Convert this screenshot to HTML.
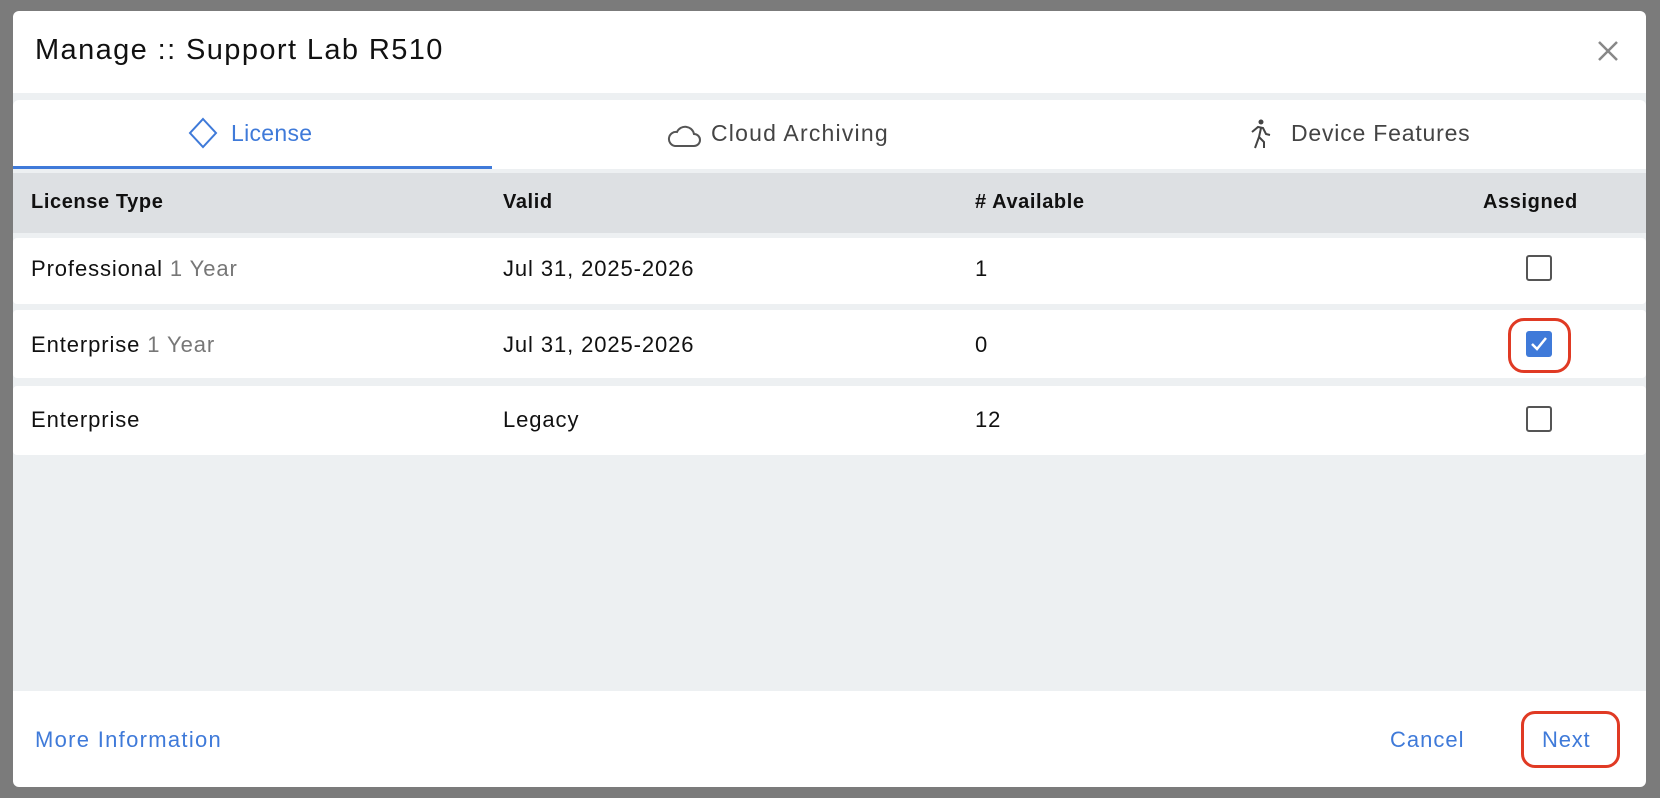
<!DOCTYPE html>
<html><head><meta charset="utf-8"><style>
*{box-sizing:border-box;margin:0;padding:0}
body{width:1660px;height:798px;background:#7b7b7b;font-family:"Liberation Sans",sans-serif;position:relative;overflow:hidden;color:#111}
.dlg{position:absolute;left:13px;top:11px;width:1633px;height:776px;background:#fff;border-radius:6px;overflow:hidden}
.t{position:absolute;white-space:nowrap}
.body{position:absolute;left:0;top:82px;width:1633px;height:598px;background:#edf0f2}
.tabs{position:absolute;left:0;top:89px;width:1633px;height:69px;background:#fff;border-radius:6px 6px 0 0}
.ul{position:absolute;left:0;top:155px;width:479px;height:3px;background:#3f7ad9}
.th{position:absolute;left:0;top:162px;width:1633px;height:60px;background:#dde0e3}
.row{position:absolute;left:0;width:1633px;background:#fff;border-radius:4px}
.cb{position:absolute;width:26px;height:26px;border:2.5px solid #555;border-radius:3px;left:1513px}
.blue{color:#3f7ad9}
.d{font-size:22px;letter-spacing:0.9px}
.h{font-size:20px;font-weight:bold;letter-spacing:0.6px}
</style></head><body>
<div class="dlg">
<div class="t" style="left:22px;top:23px;font-size:29px;letter-spacing:1.4px;color:#111">Manage :: Support Lab R510</div>
<svg style="position:absolute;left:1584px;top:29px" width="22" height="22" viewBox="0 0 22 22"><path d="M2 2L20 20M20 2L2 20" stroke="#888" stroke-width="2.5"/></svg>
<div class="body"></div>
<div class="tabs"></div>
<div class="ul"></div>
<svg style="position:absolute;left:175px;top:106px" width="30" height="32" viewBox="0 0 30 32"><path d="M15 2L28 16L15 30L2 16Z" fill="none" stroke="#3f7ad9" stroke-width="2"/></svg>
<div class="t blue" style="left:218px;top:109px;font-size:23px;letter-spacing:0.3px">License</div>
<svg style="position:absolute;left:654px;top:113px" width="34" height="24" viewBox="0 0 34 24"><path d="M8 22H27a6 6 0 0 0 0-12 9 9 0 0 0-17-2 7 7 0 0 0-2 14Z" fill="none" stroke="#555" stroke-width="2"/></svg>
<div class="t" style="left:698px;top:109px;font-size:23px;letter-spacing:1.2px;color:#444">Cloud Archiving</div>
<svg style="position:absolute;left:1235px;top:107px" width="24" height="32" viewBox="0 0 24 32"><circle cx="13" cy="4" r="2.5" fill="#444"/><path d="M4 14L10 9L15 10L18 16L22 17M13 10L11 19L16 24L16 30M11 19L7 30" fill="none" stroke="#444" stroke-width="2"/></svg>
<div class="t" style="left:1278px;top:109px;font-size:23px;letter-spacing:0.8px;color:#444">Device Features</div>
<div class="th"></div>
<div class="t h" style="left:18px;top:180px">License Type</div>
<div class="t h" style="left:490px;top:180px">Valid</div>
<div class="t h" style="left:962px;top:180px"># Available</div>
<div class="t h" style="left:1470px;top:180px">Assigned</div>
<div class="row" style="top:227px;height:66px"></div>
<div class="row" style="top:299px;height:68px"></div>
<div class="row" style="top:375px;height:69px"></div>
<div class="t d" style="left:18px;top:245px">Professional <span style="color:#777">1 Year</span></div>
<div class="t d" style="left:490px;top:245px">Jul 31, 2025-2026</div>
<div class="t d" style="left:962px;top:245px">1</div>
<div class="cb" style="top:244px"></div>
<div class="t d" style="left:18px;top:321px">Enterprise <span style="color:#777">1 Year</span></div>
<div class="t d" style="left:490px;top:321px">Jul 31, 2025-2026</div>
<div class="t d" style="left:962px;top:321px">0</div>
<div style="position:absolute;left:1513px;top:320px;width:26px;height:26px;background:#3f7ad9;border-radius:3px"></div>
<svg style="position:absolute;left:1513px;top:320px" width="26" height="26"><path d="M6 13L11 18L20 7" fill="none" stroke="#fff" stroke-width="2.5"/></svg>
<div style="position:absolute;left:1495px;top:307px;width:63px;height:55px;border:3px solid #e03a24;border-radius:16px"></div>
<div class="t d" style="left:18px;top:396px">Enterprise</div>
<div class="t d" style="left:490px;top:396px">Legacy</div>
<div class="t d" style="left:962px;top:396px">12</div>
<div class="cb" style="top:395px"></div>
<div class="t blue" style="left:22px;top:716px;font-size:22px;letter-spacing:1.3px">More Information</div>
<div class="t blue" style="left:1377px;top:716px;font-size:22px;letter-spacing:1px">Cancel</div>
<div class="t blue" style="left:1529px;top:716px;font-size:22px;letter-spacing:0.8px">Next</div>
<div style="position:absolute;left:1508px;top:700px;width:99px;height:57px;border:3px solid #e03a24;border-radius:14px"></div>
</div>
</body></html>
